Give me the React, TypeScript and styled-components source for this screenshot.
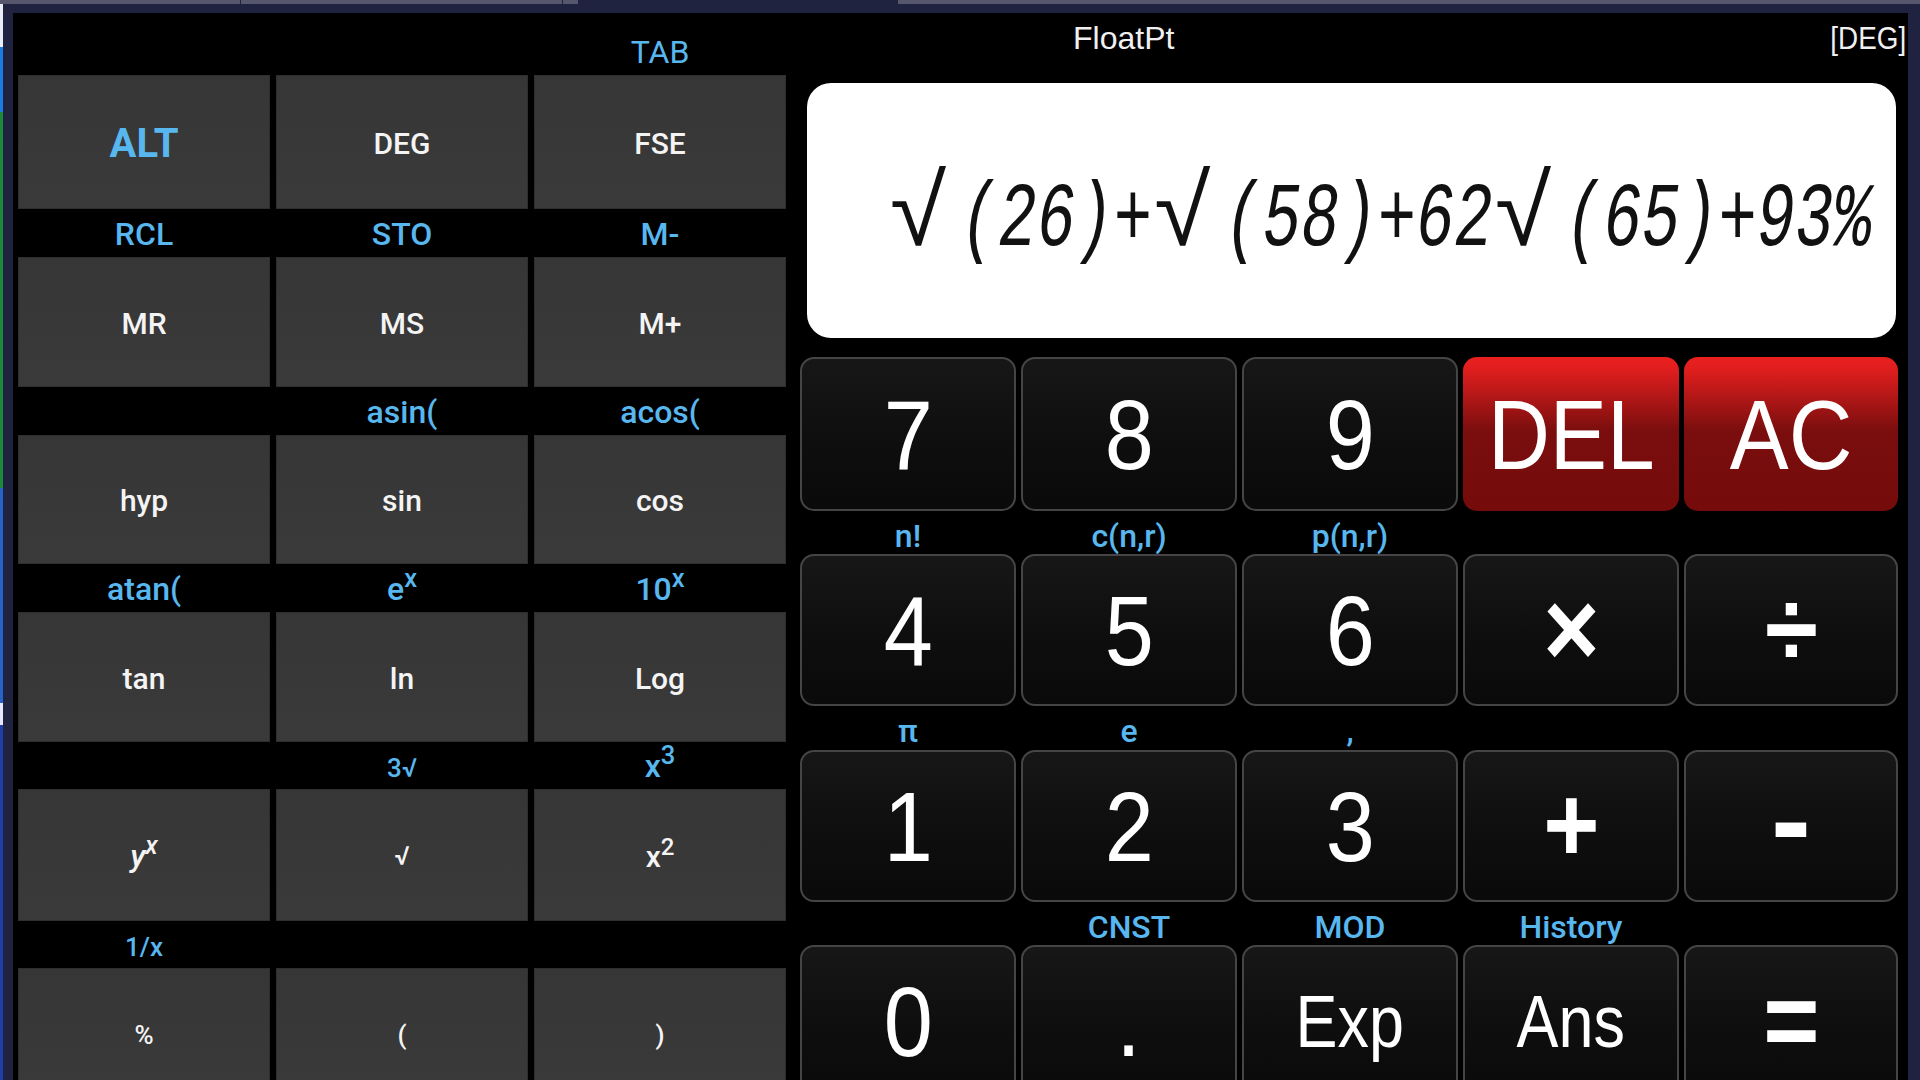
import React from 'react';
import styled, { createGlobalStyle } from 'styled-components';

const GlobalStyle = createGlobalStyle`
  html, body {
    margin: 0;
    padding: 0;
    width: 1920px;
    height: 1080px;
    overflow: hidden;
    background: #1f2340;
  }
`;

const BLUE = '#58b7ee';

const Screen = styled.div`
  width: 1920px;
  height: 1080px;
  display: flex;
  flex-direction: column;
  overflow: hidden;
  background: #1f2340;
  font-family: Roboto, 'Liberation Sans', sans-serif;
`;

const TopStrip = styled.div`
  flex: none;
  height: 4px;
  display: flex;
  gap: 1px;
  background: #1f2340;
`;

const TopTab = styled.div<{ $width?: number; $grow?: boolean }>`
  width: ${(p) => (p.$width ? `${p.$width}px` : 'auto')};
  flex: ${(p) => (p.$grow ? 1 : 'none')};
  background: #56576d;
`;

const TopGap = styled.div`
  width: 318px;
  flex: none;
`;

const Desk = styled.div`
  flex: 1;
  min-height: 0;
  display: flex;
`;

const SideRail = styled.div`
  flex: none;
  width: 3px;
  background: linear-gradient(180deg, #e8eef8 0 4%, #1a7be0 4% 10%, #1c8a3a 10% 45%, #2563c9 45% 65%, #e6e6ff 65% 67%, #1d3fa8 67% 100%);
`;

const Frame = styled.div`
  flex: 1;
  min-width: 0;
  padding: 9px 12px 0 10px;
  display: flex;
`;

const Calculator = styled.div`
  flex: 1;
  display: flex;
  background: #000;
  overflow: hidden;
`;

const FnPanel = styled.div`
  flex: none;
  width: 787px;
  padding-left: 5px;
  box-sizing: border-box;
`;

const FnLabelRow = styled.div<{ $height: number }>`
  height: ${(p) => p.$height}px;
  display: grid;
  grid-template-columns: repeat(3, 252px);
  column-gap: 6px;
  align-items: end;
`;

const FnLabel = styled.div`
  height: 47px;
  line-height: 48px;
  text-align: center;
  color: ${BLUE};
  font-size: 32px;
  font-weight: 500;
  white-space: nowrap;
`;

const Thin = styled.span`
  font-weight: 400;
`;

const Small = styled.span`
  font-size: 26px;
`;

const Sup = styled.sup`
  font-size: 0.8em;
  line-height: 0;
  vertical-align: 0.5em;
`;

const Slanted = styled.span`
  font-style: italic;
  font-size: 32px;
`;

const FnKeyRow = styled.div<{ $height: number }>`
  height: ${(p) => p.$height}px;
  display: grid;
  grid-template-columns: repeat(3, 252px);
  column-gap: 6px;
`;

const FnKey = styled.div`
  display: flex;
  align-items: center;
  justify-content: center;
  padding-top: 2px;
  box-sizing: border-box;
  background: linear-gradient(180deg, #363636, #3a3a3a);
  box-shadow: inset 0 0 0 1px #2e2e2e;
  color: #f4f4f4;
  font-size: 30px;
  font-weight: 500;
`;

const Alt = styled.span`
  color: ${BLUE};
  font-size: 40px;
  font-weight: 700;
`;

const PadPanel = styled.div`
  flex: 1;
  min-width: 0;
  padding-right: 10px;
  display: flex;
  flex-direction: column;
`;

const Header = styled.div`
  flex: none;
  height: 70px;
  margin-right: -8px;
  padding: 7px 0 0 273px;
  box-sizing: border-box;
  display: flex;
  justify-content: space-between;
  align-items: flex-start;
`;

const HeaderText = styled.div<{ $narrow?: boolean }>`
  color: #f0f0f0;
  font-family: 'Liberation Sans', Arial, sans-serif;
  font-size: 32px;
  line-height: 36px;
  transform: scaleX(${(p) => (p.$narrow ? 0.87 : 1)});
  transform-origin: right center;
`;

const Display = styled.div`
  flex: none;
  height: 255px;
  margin: 0 2px 0 7px;
  padding: 10px 24px 0 0;
  box-sizing: border-box;
  display: flex;
  align-items: center;
  justify-content: flex-end;
  background: #fff;
  border-radius: 24px;
`;

const DisplayText = styled.div`
  color: #111;
  font-family: 'Liberation Mono', 'Courier New', monospace;
  font-style: italic;
  font-size: 90px;
  line-height: 90px;
  white-space: nowrap;
  transform: scaleX(0.71);
  transform-origin: right center;
`;

const Radical = styled.span`
  display: inline-block;
  font-family: 'Liberation Sans', Arial, sans-serif;
  font-style: normal;
  font-size: 100px;
  margin: 0 44px 0 3px;
  transform: scaleX(1.44);
  transform-origin: left center;
`;

const PadLabelRow = styled.div<{ $height: number }>`
  flex: none;
  height: ${(p) => p.$height}px;
  display: grid;
  grid-template-columns: repeat(4, 216px) 214px;
  column-gap: 5px;
`;

const PadLabel = styled.div`
  text-align: center;
  color: ${BLUE};
  font-size: 32px;
  font-weight: 500;
  line-height: 50px;
  white-space: nowrap;
`;

const PadKeyRow = styled.div<{ $height: number }>`
  flex: none;
  height: ${(p) => p.$height}px;
  display: grid;
  grid-template-columns: repeat(4, 216px) 214px;
  column-gap: 5px;
`;

const PadKey = styled.div<{ $red?: boolean }>`
  display: flex;
  align-items: center;
  justify-content: center;
  box-sizing: border-box;
  padding-top: 2px;
  border-radius: 14px;
  overflow: hidden;
  border: 2px solid ${(p) => (p.$red ? 'transparent' : '#454545')};
  background-origin: border-box;
  background-image: ${(p) =>
    p.$red
      ? 'linear-gradient(180deg, #ea1f1f 0%, #e01e1e 8%, #7a0e0e 48%, #760b0b 100%)'
      : 'linear-gradient(180deg, #171717 0%, #0e0e0e 55%, #0a0a0a 100%)'};
`;

const PadKeyText = styled.span<{ $size: number; $heavy?: boolean; $squeeze: number; $lift: number }>`
  color: #fff;
  font-family: 'Liberation Sans', Arial, sans-serif;
  font-size: ${(p) => p.$size}px;
  font-weight: ${(p) => (p.$heavy ? 700 : 400)};
  line-height: 1;
  margin-bottom: ${(p) => p.$lift}px;
  transform: scaleX(${(p) => p.$squeeze});
`;

interface FnRow {
  height: number;
  keyHeight: number;
  labels: React.ReactNode[];
  keys: React.ReactNode[];
}

const fnRows: FnRow[] = [
  { height: 62, keyHeight: 134, labels: ['', '', <Thin key='tab'>TAB</Thin>], keys: [<Alt key='alt'>ALT</Alt>, 'DEG', 'FSE'] },
  { height: 48, keyHeight: 130, labels: ['RCL', 'STO', 'M-'], keys: ['MR', 'MS', 'M+'] },
  { height: 48, keyHeight: 129, labels: ['', 'asin(', 'acos('], keys: ['hyp', 'sin', 'cos'] },
  { height: 48, keyHeight: 130, labels: ['atan(', <>e<Sup>x</Sup></>, <>10<Sup>x</Sup></>], keys: ['tan', 'ln', 'Log'] },
  {
    height: 47,
    keyHeight: 132,
    labels: ['', <Small key='cbrt'>3√</Small>, <>x<Sup>3</Sup></>],
    keys: [<Slanted key='yx'>y<Sup>x</Sup></Slanted>, <Small key='sqrt'>√</Small>, <span key='sq'>x<Sup>2</Sup></span>],
  },
  { height: 47, keyHeight: 132, labels: [<Small key='inv'>1/x</Small>, '', ''], keys: [<Small key='pct'>%</Small>, <Small key='lp'>(</Small>, <Small key='rp'>)</Small>] },
];

interface PadKeyDef {
  text: string;
  red?: boolean;
  heavy?: boolean;
  size?: number;
  squeeze?: number;
  lift?: number;
}

interface PadRow {
  gap: number;
  height: number;
  label: string[];
  keys: PadKeyDef[];
}

const op = (text: string, lift = 3): PadKeyDef => ({ text, heavy: true, size: 107, lift });
const word = (text: string): PadKeyDef => ({ text, size: 74, squeeze: 0.85 });

const padRows: PadRow[] = [
  {
    gap: 19,
    height: 154,
    label: [],
    keys: [{ text: '7' }, { text: '8' }, { text: '9' }, { text: 'DEL', red: true, squeeze: 0.875 }, { text: 'AC', red: true }],
  },
  {
    gap: 43,
    height: 152,
    label: ['n!', 'c(n,r)', 'p(n,r)', '', ''],
    keys: [{ text: '4' }, { text: '5' }, { text: '6' }, op('×'), op('÷')],
  },
  {
    gap: 44,
    height: 152,
    label: ['π', 'e', ',', '', ''],
    keys: [{ text: '1' }, { text: '2' }, { text: '3' }, op('+', 5), { text: '-', heavy: true, size: 120, squeeze: 1, lift: 16 }],
  },
  {
    gap: 43,
    height: 152,
    label: ['', 'CNST', 'MOD', 'History', ''],
    keys: [{ text: '0' }, { text: '.' }, word('Exp'), word('Ans'), op('=')],
  },
];

function App() {
  return (
    <>
      <GlobalStyle />
      <Screen>
        <TopStrip>
          <TopTab $width={240} />
          <TopTab $width={321} />
          <TopTab $width={15} />
          <TopGap />
          <TopTab $grow />
        </TopStrip>
        <Desk>
          <SideRail />
          <Frame>
            <Calculator>
              <FnPanel>
                {fnRows.map((row, i) => (
                  <React.Fragment key={i}>
                    <FnLabelRow $height={row.height}>
                      {row.labels.map((label, j) => (
                        <FnLabel key={j}>{label}</FnLabel>
                      ))}
                    </FnLabelRow>
                    <FnKeyRow $height={row.keyHeight}>
                      {row.keys.map((key, j) => (
                        <FnKey key={j}>{key}</FnKey>
                      ))}
                    </FnKeyRow>
                  </React.Fragment>
                ))}
              </FnPanel>
              <PadPanel>
                <Header>
                  <HeaderText>FloatPt</HeaderText>
                  <HeaderText $narrow>[DEG]</HeaderText>
                </Header>
                <Display>
                  <DisplayText>
                    <Radical>√</Radical>(26)+<Radical>√</Radical>(58)+62<Radical>√</Radical>(65)+93%
                  </DisplayText>
                </Display>
                {padRows.map((row, i) => (
                  <React.Fragment key={i}>
                    <PadLabelRow $height={row.gap}>
                      {row.label.map((label, j) => (
                        <PadLabel key={j}>{label}</PadLabel>
                      ))}
                    </PadLabelRow>
                    <PadKeyRow $height={row.height}>
                      {row.keys.map((key, j) => (
                        <PadKey key={j} $red={key.red}>
                          <PadKeyText $size={key.size ?? 98} $heavy={key.heavy} $squeeze={key.squeeze ?? 0.9} $lift={key.lift ?? 0}>
                            {key.text}
                          </PadKeyText>
                        </PadKey>
                      ))}
                    </PadKeyRow>
                  </React.Fragment>
                ))}
              </PadPanel>
            </Calculator>
          </Frame>
        </Desk>
      </Screen>
    </>
  );
}

export default App;
